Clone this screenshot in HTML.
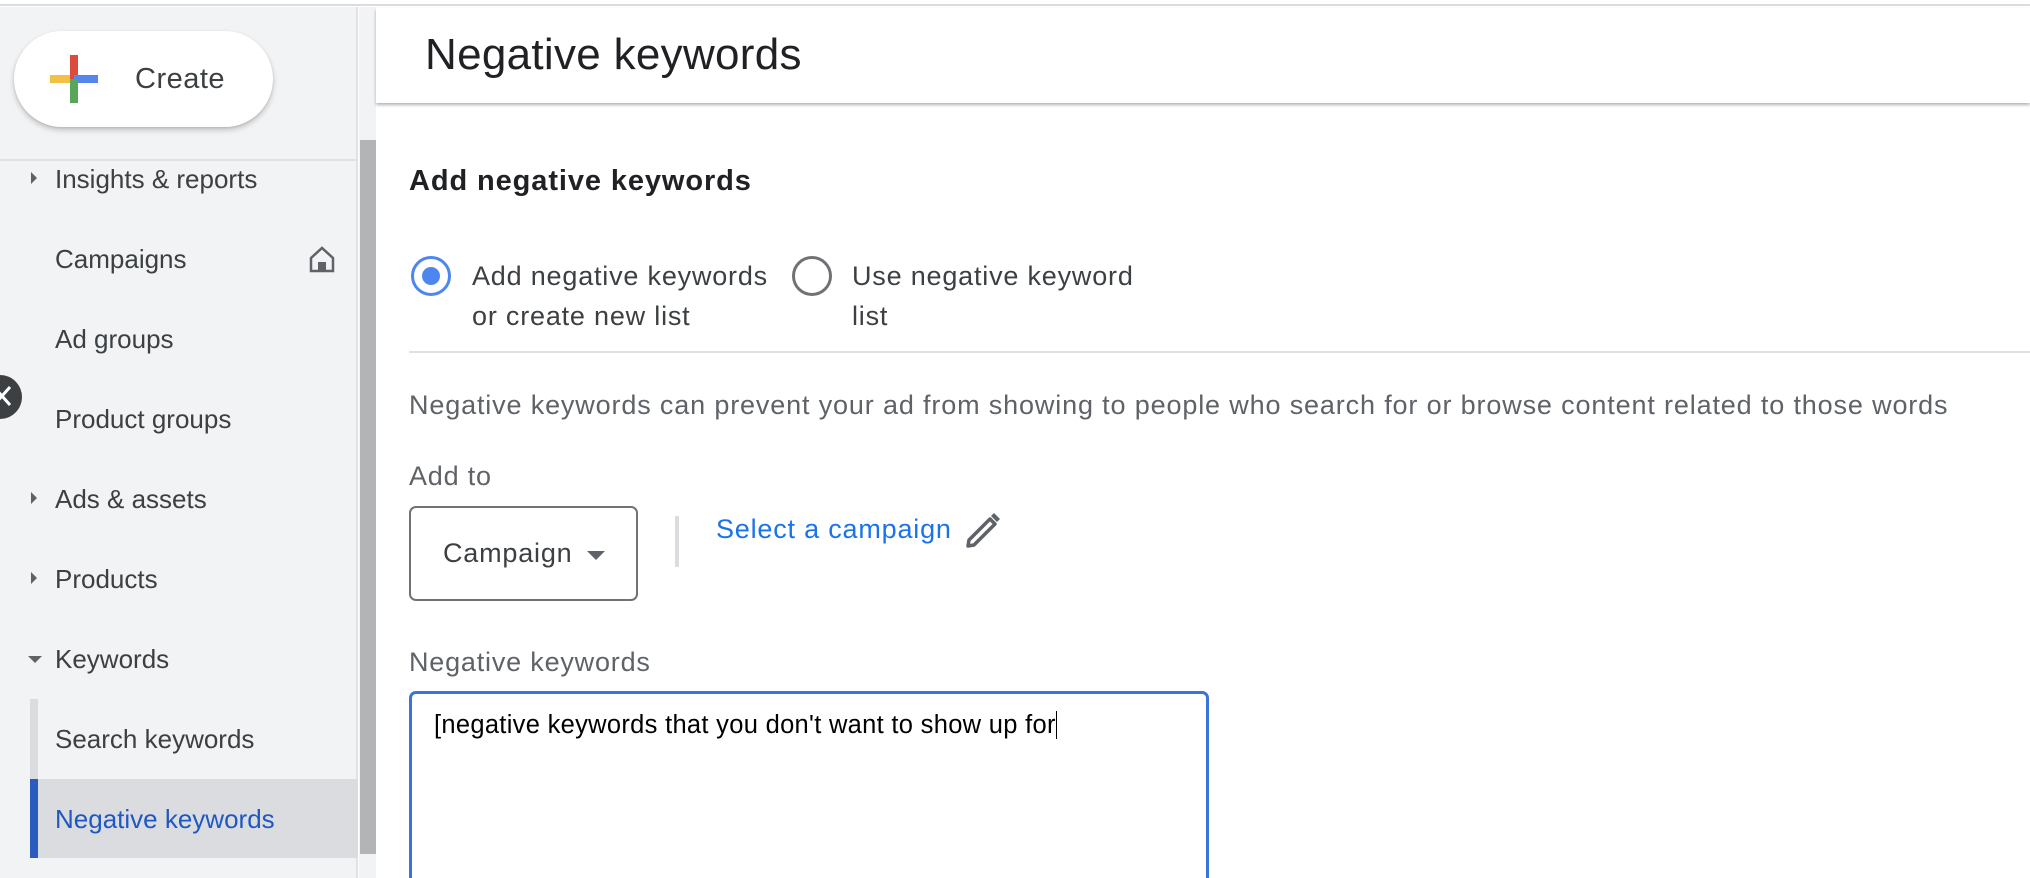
<!DOCTYPE html>
<html style="overflow:hidden;width:2030px;height:878px"><head><meta charset="utf-8"><style>
*{margin:0;padding:0;box-sizing:border-box}
body{width:2030px;height:878px;overflow:hidden;background:#fff;font-family:"Liberation Sans",Arial,sans-serif;position:relative}
.a{position:absolute;white-space:nowrap}
.nav{position:absolute;left:55px;font-size:26px;color:#3c4043;line-height:30px;white-space:nowrap}
.tri{position:absolute;left:31px;width:0;height:0;border-top:6px solid transparent;border-bottom:6px solid transparent;border-left:6px solid #5f6368}
</style></head><body>
<div class="a" style="left:0;top:0;width:2030px;height:6px;background:#fff;border-bottom:2px solid #dcdce0"></div>
<div class="a" style="left:0;top:7px;width:358px;height:871px;background:#f1f3f4;border-right:2px solid #e0e1e3"></div>
<div class="a" style="left:359px;top:7px;width:17px;height:871px;background:#f1f3f4"></div>
<div class="a" style="left:360px;top:140px;width:16px;height:714px;background:#b3b4b6"></div>
<div class="a" style="left:0;top:159px;width:358px;height:2px;background:#dfe0e2"></div>
<div class="a" style="left:14px;top:31px;width:259px;height:96px;background:#fff;border-radius:48px;box-shadow:0 3px 6px rgba(0,0,0,.2),0 1px 2px rgba(0,0,0,.1)"></div>
<div class="a" style="left:50px;top:75px;width:24px;height:8px;background:#f4bf42"></div>
<div class="a" style="left:70px;top:55px;width:8px;height:24px;background:#db4c3f"></div>
<div class="a" style="left:74px;top:75px;width:24px;height:8px;background:#5486eb"></div>
<div class="a" style="left:70px;top:79px;width:8px;height:24px;background:#57a65a"></div>
<div class="a" style="left:135px;top:62px;font-size:29px;color:#3c4043;line-height:34px;letter-spacing:0.5px">Create</div>

<div class="tri" style="top:172px"></div><div class="nav" style="top:164px">Insights &amp; reports</div>
<div class="nav" style="top:244px">Campaigns</div>
<svg class="a" style="left:309px;top:245px" width="26" height="28" viewBox="0 0 26 28"><path d="M2 13 L13 3 L24 13 V26 H2 Z" fill="none" stroke="#5f6368" stroke-width="2.5"/><rect x="9" y="17" width="8" height="9" fill="#5f6368"/></svg>
<div class="nav" style="top:324px">Ad groups</div>
<div class="nav" style="top:404px">Product groups</div>
<div class="tri" style="top:492px"></div><div class="nav" style="top:484px">Ads &amp; assets</div>
<div class="tri" style="top:572px"></div><div class="nav" style="top:564px">Products</div>
<div class="a" style="left:28px;top:656px;width:0;height:0;border-left:7px solid transparent;border-right:7px solid transparent;border-top:7px solid #5f6368"></div>
<div class="nav" style="top:644px">Keywords</div>
<div class="a" style="left:30px;top:699px;width:8px;height:80px;background:#dadce0"></div>
<div class="nav" style="top:724px">Search keywords</div>
<div class="a" style="left:30px;top:779px;width:328px;height:79px;background:#dadce0"></div>
<div class="a" style="left:30px;top:779px;width:8px;height:79px;background:#2a5bbf"></div>
<div class="nav" style="top:804px;color:#1f58c2">Negative keywords</div>
<div class="a" style="left:-22px;top:375px;width:44px;height:44px;border-radius:50%;background:#3c4043"></div>
<svg class="a" style="left:0;top:385px" width="14" height="24"><path d="M-6 2 L10 20 M-6 20 L10 2" stroke="#fff" stroke-width="3"/></svg>

<div class="a" style="left:376px;top:8px;width:1654px;height:95px;background:#fff;box-shadow:0 2px 3px rgba(0,0,0,.3)"></div>
<div class="a" style="left:425px;top:30px;font-size:44px;color:#202124;line-height:50px;letter-spacing:0.3px">Negative keywords</div>

<div class="a" style="left:409px;top:164px;font-size:29px;color:#202124;font-weight:bold;line-height:34px;letter-spacing:0.9px">Add negative keywords</div>
<div class="a" style="left:411px;top:256px;width:40px;height:40px;border-radius:50%;border:3.5px solid #4d86ee"></div>
<div class="a" style="left:422px;top:267px;width:18px;height:18px;border-radius:50%;background:#4d86ee"></div>
<div class="a" style="left:472px;top:256px;font-size:27px;color:#3c4043;line-height:40px;letter-spacing:0.8px">Add negative keywords<br>or create new list</div>
<div class="a" style="left:792px;top:256px;width:40px;height:40px;border-radius:50%;border:3.5px solid #707275"></div>
<div class="a" style="left:852px;top:256px;font-size:27px;color:#3c4043;line-height:40px;letter-spacing:0.8px">Use negative keyword<br>list</div>
<div class="a" style="left:409px;top:351px;width:1621px;height:2px;background:#e0e0e0"></div>
<div class="a" style="left:409px;top:390px;font-size:27px;color:#5f6368;line-height:30px;letter-spacing:0.85px">Negative keywords can prevent your ad from showing to people who search for or browse content related to those words</div>
<div class="a" style="left:409px;top:461px;font-size:27px;color:#5f6368;line-height:30px;letter-spacing:0.8px">Add to</div>
<div class="a" style="left:409px;top:506px;width:229px;height:95px;border:2px solid #707275;border-radius:7px"></div>
<div class="a" style="left:443px;top:538px;font-size:27px;color:#3c4043;line-height:30px;letter-spacing:0.8px">Campaign</div>
<div class="a" style="left:587px;top:551px;width:0;height:0;border-left:9px solid transparent;border-right:9px solid transparent;border-top:9px solid #5f6368"></div>
<div class="a" style="left:675px;top:516px;width:4px;height:51px;background:#dadce0"></div>
<div class="a" style="left:716px;top:514px;font-size:27px;color:#1a73e8;line-height:30px;letter-spacing:0.8px">Select a campaign</div>
<svg class="a" style="left:963px;top:510px" width="40" height="40" viewBox="0 0 40 40"><path d="M6 30 L27 9 L32 14 L11 35 L5 36 Z" fill="none" stroke="#5f6368" stroke-width="3.5" stroke-linejoin="round"/><path d="M28 6 L31 3 L37 9 L34 12 Z" fill="#5f6368"/></svg>
<div class="a" style="left:409px;top:647px;font-size:27px;color:#5f6368;line-height:30px;letter-spacing:0.8px">Negative keywords</div>
<div class="a" style="left:409px;top:691px;width:800px;height:187px;overflow:hidden">
<div style="width:800px;height:230px;border:3px solid #3b73d9;border-radius:7px"></div></div>
<div class="a" style="left:434px;top:710px;font-size:25.5px;color:#000;line-height:30px;letter-spacing:0.3px">[negative keywords that you don't want to show up for<span style="display:inline-block;width:1.5px;height:28px;background:#000;vertical-align:-6px"></span></div>
</body></html>
